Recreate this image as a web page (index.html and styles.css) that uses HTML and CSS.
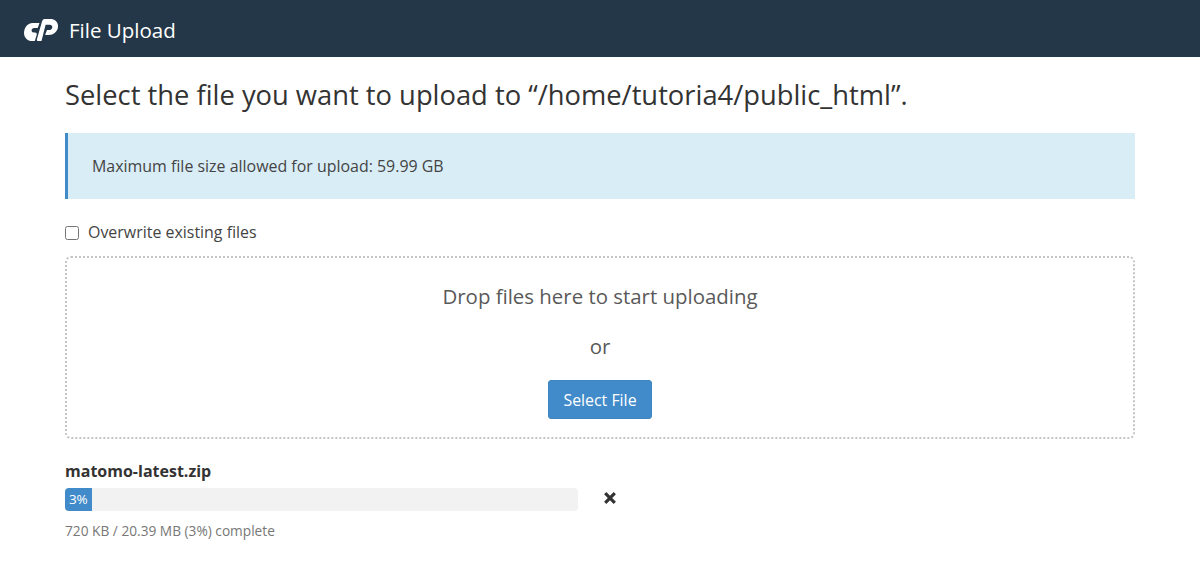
FILE: index.html
```html
<!DOCTYPE html>
<html lang="en">
<head>
<meta charset="utf-8">
<title>File Upload</title>
<link rel="stylesheet" href="styles.css">
</head>
<body>
<header class="topbar">
  <svg class="logo" viewBox="0 0 34 24" width="34" height="24" aria-hidden="true">
    <path class="logo-c" d="M8.500 5H15.500L13.700 10H10c-1.300 0-2.300 1-2.400 2.200-.1 1.200.8 2.200 2 2.200h1.500c1.300 0 2 1.200 1.600 2.400L10.800 23H8.200C3 23-.5 18.900.1 13.800.7 8.900 4.200 5 8.500 5z"/>
    <path class="logo-c" d="M20.500 1h6c4.800 0 8 3.500 7.500 8-.5 4.600-4.600 8-9.300 8h-3.600l1.900-5h2.100c1.700 0 3-1.100 3.200-2.600.2-1.500-.9-2.700-2.500-2.700h-4.200L17.500 23h-3.300c-1 0-1.600-.9-1.300-1.800L18 3.500c.5-1.500 1.300-2.500 2.500-2.500z"/>
  </svg>
  <span class="topbar-title">File Upload</span>
</header>
<main class="content">
  <h1 class="heading">Select the file you want to upload to “/home/tutoria4/public_html”.</h1>
  <div class="notice">Maximum file size allowed for upload: 59.99 GB</div>
  <label class="overwrite"><input type="checkbox" class="check"><span>Overwrite existing files</span></label>
  <section class="dropzone">
    <p class="drop-text">Drop files here to start uploading</p>
    <p class="drop-or">or</p>
    <button class="select-btn" type="button">Select File</button>
  </section>
  <section class="upload">
    <div class="file-name">matomo-latest.zip</div>
    <div class="progress-row">
      <div class="progress"><div class="progress-bar" style="width:5.200%">3%</div></div>
      <svg class="cancel" viewBox="0 0 14 14" width="14" height="14" aria-hidden="true"><path d="M2.200 2.200l9.600 9.600M11.800 2.200l-9.600 9.600"/></svg>
    </div>
    <div class="status">720 KB / 20.39 MB (3%) complete</div>
  </section>
</main>
</body>
</html>
```
FILE: styles.css
```css
* { box-sizing: border-box; }
html, body { margin: 0; padding: 0; }
body {
  background: #fff;
  font-family: "Open Sans", "Liberation Sans", sans-serif;
  color: #333;
  height: 568px;
  overflow: hidden;
}
.topbar {
  height: 57px;
  background: #243748;
  display: flex;
  align-items: center;
  padding-left: 24px;
  padding-top: 3px;
  color: #fff;
}
.logo { margin-right: 11px; margin-top: -1px; }
.logo-c { fill: #fff; }
.topbar-title { font-size: 20.500px; line-height: 24px; }
.content { padding: 0 65px; }
.heading {
  margin: 0;
  padding-top: 20px;
  font-size: 27.340px;
  line-height: 36px;
  font-weight: 400;
  color: #333;
  white-space: nowrap;
}
.notice {
  margin-top: 20px;
  height: 66px;
  background: #d9edf7;
  border-left: 3px solid #428bca;
  padding-left: 24px;
  padding-bottom: 1px;
  display: flex;
  align-items: center;
  font-size: 15.950px;
  color: #444;
}
.overwrite {
  margin-top: 23px;
  height: 20px;
  display: flex;
  align-items: center;
  font-size: 15.950px;
  color: #444;
}
.check {
  margin: 1px 9px 0 0;
  width: 14px;
  height: 14px;
}
.dropzone {
  margin-top: 14px;
  height: 183px;
  border: 2px dotted #c4c4c4;
  border-radius: 6px;
  display: flex;
  flex-direction: column;
  align-items: center;
  padding-top: 25px;
}
.drop-text, .drop-or {
  margin: 0;
  font-size: 20.420px;
  line-height: 26px;
  color: #595959;
}
.drop-or { margin-top: 24px; }
.select-btn {
  margin-top: 21px;
  width: 104px;
  height: 39px;
  background: #428bca;
  border: 1px solid #3f85c1;
  border-radius: 3px;
  color: #fff;
  font-family: inherit;
  font-size: 15.900px;
}
.upload { margin-top: 21px; }
.file-name {
  font-size: 16px;
  line-height: 22px;
  font-weight: 700;
  color: #333;
}
.progress-row {
  margin-top: 6px;
  display: flex;
  align-items: center;
}
.progress {
  width: 513px;
  height: 23px;
  background: #f2f2f2;
  border-radius: 4px;
  overflow: hidden;
}
.progress-bar {
  height: 100%;
  background: #428bca;
  color: #fff;
  font-size: 13.500px;
  line-height: 23px;
  text-align: center;
}
.cancel { margin-left: 25px; margin-top: -3px; }
.cancel path { stroke: #333; stroke-width: 3.200; fill: none; }
.status {
  margin-top: 11px;
  font-size: 13.700px;
  line-height: 18px;
  color: #777;
}
```
